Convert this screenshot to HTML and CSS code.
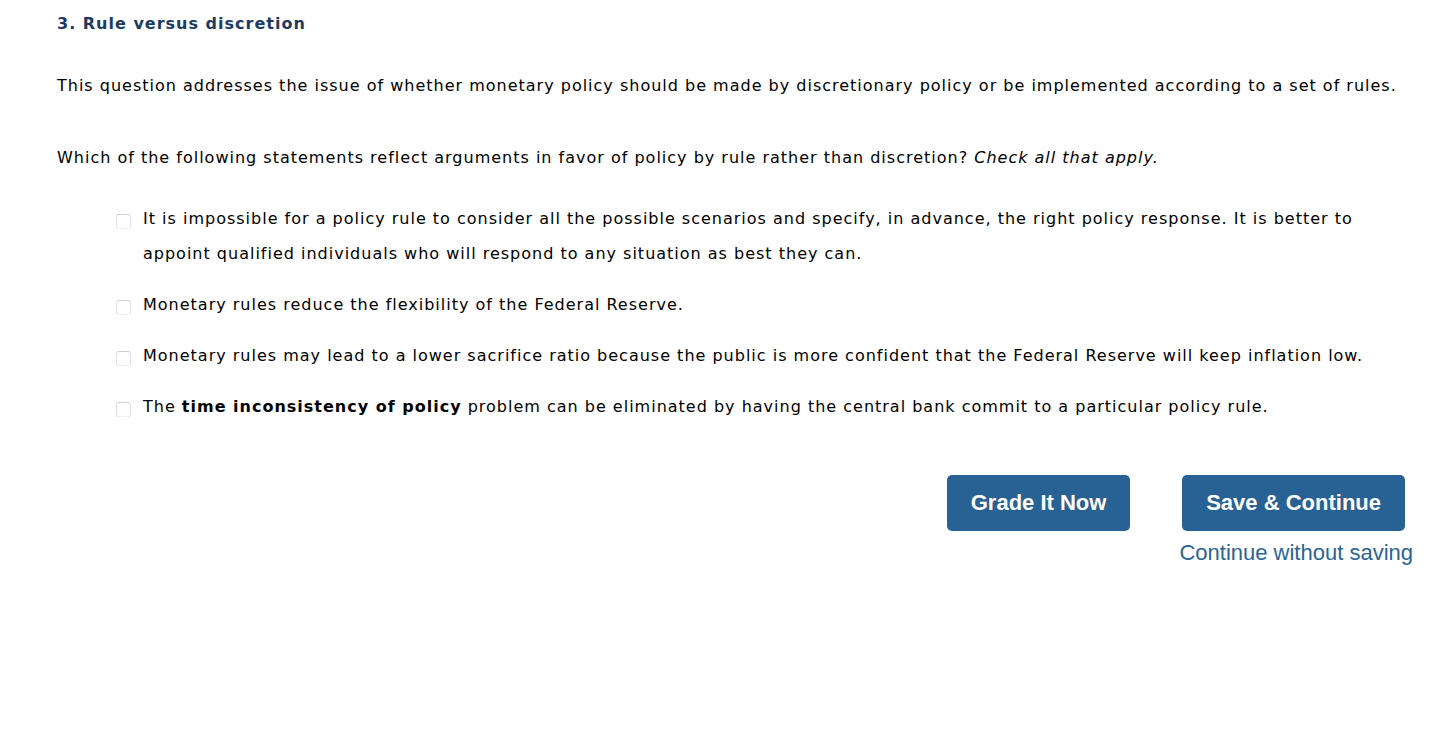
FILE: index.html
```html
<!DOCTYPE html>
<html>
<head>
<meta charset="utf-8">
<link rel="stylesheet" href="styles.css">
</head>
<body>
<div class="page">
  <h2 class="title">3. Rule versus discretion</h2>
  <p class="para intro">This question addresses the issue of whether monetary policy should be made by discretionary policy or be implemented according to a set of rules.</p>
  <p class="para prompt">Which of the following statements reflect arguments in favor of policy by rule rather than discretion? <em>Check all that apply.</em></p>
  <ul class="options">
    <li class="option"><span class="box"></span><span class="text">It is impossible for a policy rule to consider all the possible scenarios and specify, in advance, the right policy response. It is better to appoint qualified individuals who will respond to any situation as best they can.</span></li>
    <li class="option"><span class="box"></span><span class="text">Monetary rules reduce the flexibility of the Federal Reserve.</span></li>
    <li class="option"><span class="box"></span><span class="text">Monetary rules may lead to a lower sacrifice ratio because the public is more confident that the Federal Reserve will keep inflation low.</span></li>
    <li class="option"><span class="box"></span><span class="text">The <b>time inconsistency of policy</b> problem can be eliminated by having the central bank commit to a particular policy rule.</span></li>
  </ul>
  <div class="actions">
    <button class="btn">Grade It Now</button>
    <div class="save-col">
      <button class="btn save">Save &amp; Continue</button>
      <a class="skip" href="#">Continue without saving</a>
    </div>
  </div>
</div>
</body>
</html>
```
FILE: styles.css
```css
html, body { margin: 0; padding: 0; background: #fff; }
body { font-family: "DejaVu Sans", Verdana, sans-serif; color: #000; font-size: 16px; letter-spacing: 1px; }
.page { padding: 13px 38px 0 57px; }
.title { margin: 0; font-size: 16px; font-weight: bold; color: #1b3b63; line-height: 22px; }
.para { margin: 0; line-height: 22px; }
.intro { margin-top: 40px; }
.prompt { margin-top: 50px; }
.prompt em { font-style: italic; }
.options { list-style: none; margin: 32px 0 0 0; padding: 0 0 0 59px; }
.option { display: flex; align-items: flex-start; margin-bottom: 16px; }
.option .text { line-height: 35px; }
.box { flex: none; width: 15px; height: 15px; border: 1px solid #e2e2e2; border-top-color: #cfcfcf; border-bottom-color: #f0f0f0; border-radius: 3px; background: #fff; margin: 13px 12px 0 0; box-sizing: border-box; }
.actions { display: flex; justify-content: flex-end; align-items: flex-start; gap: 49px; margin-top: 51px; }
.save-col { display: flex; flex-direction: column; align-items: flex-end; }
.btn { font-family: "Liberation Sans", Arial, sans-serif; font-weight: bold; font-size: 22px; letter-spacing: 0; color: #fff; background: #286193; border: none; border-radius: 5px; height: 56px; padding: 0 24px; cursor: pointer; }
.skip { font-family: "Liberation Sans", Arial, sans-serif; font-size: 22px; letter-spacing: 0; color: #2a6496; text-decoration: none; margin-top: 9px; margin-right: -8px; }
```
